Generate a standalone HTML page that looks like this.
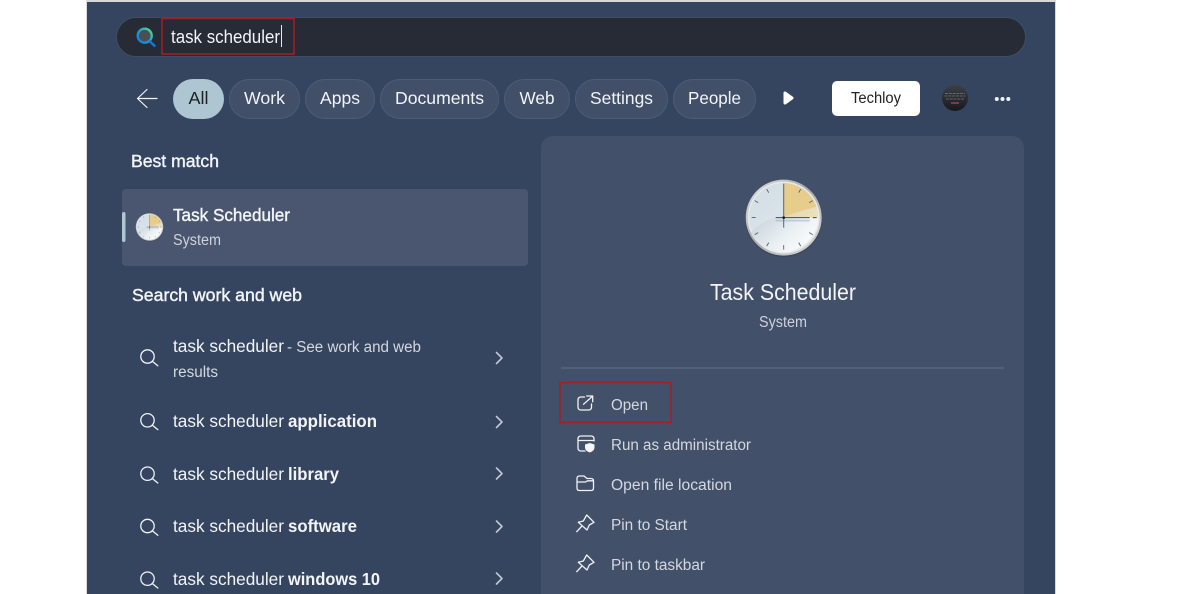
<!DOCTYPE html>
<html>
<head>
<meta charset="utf-8">
<style>
html,body{margin:0;padding:0;background:#fff;width:1182px;height:594px;overflow:hidden}
svg{display:block}
text{font-family:"Liberation Sans",sans-serif;fill:#f2f4f7}
.p{font-size:17.5px;text-anchor:middle}
.l{font-size:17.5px}
.b{font-weight:bold}
.s{stroke:#f2f4f7;stroke-width:.4px}
.a{font-size:15.5px;fill:#d3d8e0}
.i{fill:none;stroke:#f0f2f5;stroke-width:1.3;stroke-linecap:round;stroke-linejoin:round}
.c{fill:none;stroke:#c0c7d1;stroke-width:1.6;stroke-linecap:round;stroke-linejoin:round}
.pill{fill:#414f68;stroke:#4d5b74;stroke-width:1}
</style>
</head>
<body>
<svg width="1182" height="594" viewBox="0 0 1182 594" xmlns="http://www.w3.org/2000/svg">
<defs>
<linearGradient id="rim" x1="0" y1="0" x2="1" y2="1"><stop offset="0" stop-color="#e4e4e4"/><stop offset=".45" stop-color="#a9abae"/><stop offset="1" stop-color="#d8d8d8"/></linearGradient>
<linearGradient id="face" x1="0" y1="0" x2="1" y2="1"><stop offset="0" stop-color="#d0dde5"/><stop offset="1" stop-color="#e4e9ec"/></linearGradient>
<linearGradient id="low" x1="0" y1=".2" x2="1" y2=".8"><stop offset="0" stop-color="#c8d4da"/><stop offset=".5" stop-color="#e9eff2"/><stop offset="1" stop-color="#ffffff"/></linearGradient>
<symbol id="clock" viewBox="0 0 80 80">
<circle cx="40" cy="41" r="38.500" fill="#2c3648" opacity=".3"/>
<circle cx="40" cy="40" r="38" fill="url(#rim)"/>
<circle cx="40" cy="40" r="36" fill="#e9e9e9"/>
<circle cx="40" cy="40" r="34.500" fill="url(#face)"/>
<path d="M40 40V5.500A34.500 34.500 0 0 1 74.500 40Z" fill="#e6cd8c"/>
<path d="M8 54Q22 40 40 39 58 33 73 29 75 35 74.500 40 74 60 56 70 48 74.500 40 74.500 20 74.500 8 58 8 54Z" fill="url(#low)" opacity=".45"/>
<path d="M8 54Q22 40 40 39V40H74.500C74 60 56 74.500 40 74.500 20 74.500 8 58 8 54Z" fill="url(#low)"/>
<g stroke="#4a6478" stroke-width=".9">
<path d="M57 11.500l-2 3.500M69 23l-3.500 2M69 57l-3.500-2M57 68.500l-2-3.500M40 72v-4.500M23 68.500l2-3.500M11 57l3.500-2M8 40h4M11 23l3.500 2M23 11.500l2 3.500"/>
</g>
<path d="M32 43H66" stroke="#8b9aa5" stroke-width="1.800" opacity=".4"/>
<path d="M40 6V50" stroke="#52687a" stroke-width="1" fill="none"/>
<path d="M32 40H66M69 40H73" stroke="#34506a" stroke-width="1" fill="none"/>
<circle cx="40" cy="40" r="1.400" fill="#12283a"/>
</symbol>
<g id="mag">
<circle cx="0" cy="0" r="6.700" fill="none" stroke="#f0f2f5" stroke-width="1.300"/>
<path d="M4.900 4.900L10.300 9.300" stroke="#f0f2f5" stroke-width="1.300" stroke-linecap="round"/>
</g>
<linearGradient id="sg" x1="0" y1="1" x2="1" y2="0"><stop offset="0" stop-color="#1a78d8"/><stop offset=".5" stop-color="#1e9fd0"/><stop offset="1" stop-color="#5ddc85"/></linearGradient>
<linearGradient id="av" x1="0" y1="0" x2="0" y2="1"><stop offset="0" stop-color="#3d4046"/><stop offset="1" stop-color="#17191d"/></linearGradient>
</defs>

<rect x="0" y="0" width="1182" height="594" fill="#fff"/>
<rect x="86" y="0" width="970" height="594" fill="#d9d9d9"/>
<rect x="87" y="2" width="968" height="592" fill="#36455f"/>

<!-- search bar -->
<rect x="116.500" y="17.500" width="909" height="39" rx="19.500" fill="#262b35" stroke="#3f4c63"/>
<circle cx="144.700" cy="35.700" r="7" fill="#4a4f52" stroke="url(#sg)" stroke-width="2.400"/>
<path d="M150 41.500L154.500 45.800" stroke="#1a78d0" stroke-width="2.400" stroke-linecap="round"/>
<rect x="162" y="18.500" width="132" height="35.500" fill="none" stroke="#a21f27" stroke-width="1.500"/>
<text x="171" y="43" font-size="18.500" textLength="109" lengthAdjust="spacingAndGlyphs">task scheduler</text>
<path d="M281.500 25V47" stroke="#e8e8e8" stroke-width="1"/>

<!-- back -->
<path d="M137.500 98.500H157M147 89.500L137.500 98.500 147 107.500" fill="none" stroke="#f2f4f7" stroke-width="1.200" stroke-linecap="round" stroke-linejoin="round"/>

<!-- pills -->
<rect x="173" y="79" width="51" height="40" rx="20" fill="#aec5d2"/>
<text class="p" x="198.500" y="104" textLength="20" lengthAdjust="spacingAndGlyphs" style="fill:#1c2024">All</text>
<rect class="pill" x="229.500" y="79.500" width="70" height="39" rx="19.500"/>
<text class="p" x="264.500" y="104" textLength="41" lengthAdjust="spacingAndGlyphs">Work</text>
<rect class="pill" x="305.500" y="79.500" width="69" height="39" rx="19.500"/>
<text class="p" x="340" y="104" textLength="40" lengthAdjust="spacingAndGlyphs">Apps</text>
<rect class="pill" x="380.500" y="79.500" width="118" height="39" rx="19.500"/>
<text class="p" x="439.500" y="104" textLength="89" lengthAdjust="spacingAndGlyphs">Documents</text>
<rect class="pill" x="504.500" y="79.500" width="65" height="39" rx="19.500"/>
<text class="p" x="537" y="104" textLength="35" lengthAdjust="spacingAndGlyphs">Web</text>
<rect class="pill" x="575.500" y="79.500" width="92" height="39" rx="19.500"/>
<text class="p" x="621.500" y="104" textLength="63" lengthAdjust="spacingAndGlyphs">Settings</text>
<rect class="pill" x="673.500" y="79.500" width="82" height="39" rx="19.500"/>
<text class="p" x="714.500" y="104" textLength="53" lengthAdjust="spacingAndGlyphs">People</text>

<!-- play -->
<path d="M785 93L792 98 785 103Z" fill="#fff" stroke="#fff" stroke-width="3" stroke-linejoin="round"/>

<!-- Techloy -->
<rect x="832" y="81" width="88" height="35" rx="5" fill="#fff"/>
<text x="851" y="103" font-size="15.500" textLength="50" lengthAdjust="spacingAndGlyphs" style="fill:#222">Techloy</text>

<!-- avatar -->
<circle cx="955" cy="98" r="13" fill="url(#av)"/>
<path d="M945 93.500H965M944.500 96H965.500M946 99H964" stroke="#77797d" stroke-width=".7" stroke-dasharray="3 .8"/>
<path d="M951 103H959" stroke="#c2456e" stroke-width="1.200"/>

<!-- dots -->
<circle cx="996.800" cy="99" r="2" fill="#f0f2f5"/><circle cx="1002.500" cy="99" r="2" fill="#f0f2f5"/><circle cx="1008.300" cy="99" r="2" fill="#f0f2f5"/>

<!-- best match -->
<text class="l s" x="131" y="167" textLength="88" lengthAdjust="spacingAndGlyphs">Best match</text>
<rect x="122" y="189" width="406" height="77" rx="4" fill="#4a566f"/>
<rect x="122" y="212" width="3.500" height="30" rx="1.700" fill="#aec5d2"/>
<use href="#clock" x="135" y="212.500" width="29" height="29"/>
<text class="l s" x="173" y="221" textLength="117" lengthAdjust="spacingAndGlyphs">Task Scheduler</text>
<text class="a" x="173" y="245" textLength="48" lengthAdjust="spacingAndGlyphs" style="fill:#ccd2db">System</text>

<text class="l s" x="132" y="301" textLength="170" lengthAdjust="spacingAndGlyphs">Search work and web</text>

<!-- results -->
<use href="#mag" x="147.500" y="356.500"/>
<text class="l" x="173" y="352" textLength="111" lengthAdjust="spacingAndGlyphs">task scheduler</text>
<text class="a" x="287" y="352" textLength="134" lengthAdjust="spacingAndGlyphs">- See work and web</text>
<text class="a" x="173" y="377" textLength="45" lengthAdjust="spacingAndGlyphs">results</text>
<path class="c" d="M496.500 352.500L502 358 496.500 363.500"/>

<use href="#mag" x="147.500" y="420.300"/>
<text class="l" x="173" y="427" textLength="111" lengthAdjust="spacingAndGlyphs">task scheduler</text>
<text class="l b" x="288" y="427" textLength="89" lengthAdjust="spacingAndGlyphs">application</text>
<path class="c" d="M496.500 416.500L502 422 496.500 427.500"/>

<use href="#mag" x="147.500" y="473.700"/>
<text class="l" x="173" y="480" textLength="111" lengthAdjust="spacingAndGlyphs">task scheduler</text>
<text class="l b" x="288" y="480" textLength="51" lengthAdjust="spacingAndGlyphs">library</text>
<path class="c" d="M496.500 468L502 473.500 496.500 479"/>

<use href="#mag" x="147.500" y="526"/>
<text class="l" x="173" y="532" textLength="111" lengthAdjust="spacingAndGlyphs">task scheduler</text>
<text class="l b" x="288" y="532" textLength="69" lengthAdjust="spacingAndGlyphs">software</text>
<path class="c" d="M496.500 521L502 526.500 496.500 532"/>

<use href="#mag" x="147.500" y="578.700"/>
<text class="l" x="173" y="585" textLength="111" lengthAdjust="spacingAndGlyphs">task scheduler</text>
<text class="l b" x="288" y="585" textLength="92" lengthAdjust="spacingAndGlyphs">windows 10</text>
<path class="c" d="M496.500 573L502 578.500 496.500 584"/>

<!-- right panel -->
<path d="M541 594V148A12 12 0 0 1 553 136H1012A12 12 0 0 1 1024 148V594Z" fill="#425069"/>
<use href="#clock" x="743.700" y="177.600" width="80" height="80"/>
<text x="710" y="300" font-size="23" textLength="146" lengthAdjust="spacingAndGlyphs">Task Scheduler</text>
<text class="a" x="759" y="327" textLength="48" lengthAdjust="spacingAndGlyphs" style="fill:#ccd2db">System</text>
<rect x="561" y="367" width="443" height="2" fill="#536079"/>

<rect x="560" y="382.500" width="111" height="40" fill="none" stroke="#a21f27" stroke-width="1.500"/>

<!-- open -->
<path class="i" d="M584.500 397H581Q578 397 578 400V407Q578 410 581 410H588.500Q591.500 410 591.500 407V404"/>
<path class="i" d="M583.500 404.300L592.700 396M586.700 396H592.700V401.700"/>
<text class="a" x="611" y="410" textLength="37" lengthAdjust="spacingAndGlyphs">Open</text>

<!-- run as admin -->
<path class="i" d="M585 451H581Q578 451 578 448V439Q578 436 581 436H591Q594 436 594 439V441"/>
<path class="i" d="M578 440.500H594"/>
<path d="M589.800 443L594.500 444.500V447.500Q594.500 451 589.800 452.500 585 451 585 447.500V444.500Z" fill="#f5f6f8"/>
<text class="a" x="611" y="450" textLength="140" lengthAdjust="spacingAndGlyphs">Run as administrator</text>

<!-- folder -->
<path class="i" d="M577 488V478.500Q577 476 579.500 476H584L587 478.500H591Q593.500 478.500 593.500 481V488Q593.500 490.500 591 490.500H579.500Q577 490.500 577 488Z"/>
<path class="i" d="M577.500 482H585.500L587.500 480.800H593"/>
<text class="a" x="611" y="490" textLength="121" lengthAdjust="spacingAndGlyphs">Open file location</text>

<!-- pins -->
<path class="i" d="M586.700 515L594 522.300 589.300 525 587 530 578.300 522.300 583.300 521Z"/>
<path class="i" d="M581.500 526.500L576.700 531.700"/>
<text class="a" x="611" y="530" textLength="76" lengthAdjust="spacingAndGlyphs">Pin to Start</text>

<path class="i" d="M586.700 555L594 562.300 589.300 565 587 570 578.300 562.300 583.300 561Z"/>
<path class="i" d="M581.500 566.500L576.700 571.700"/>
<text class="a" x="611" y="570" textLength="94" lengthAdjust="spacingAndGlyphs">Pin to taskbar</text>
</svg>
</body>
</html>
